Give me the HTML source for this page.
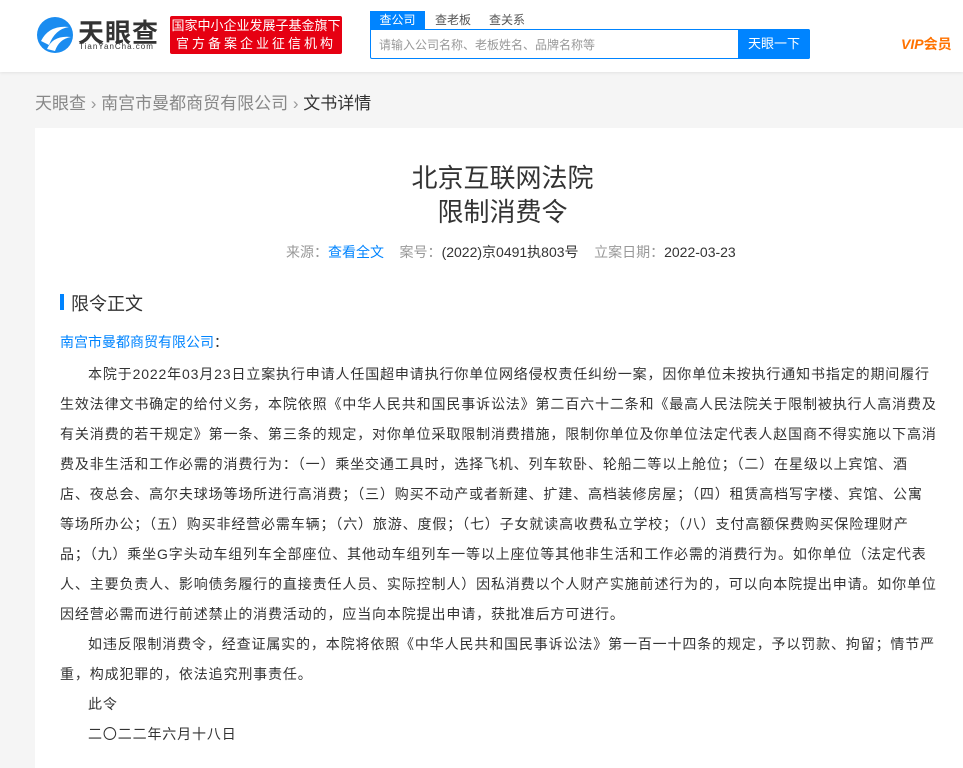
<!DOCTYPE html>
<html><head><meta charset="utf-8"><style>
*{margin:0;padding:0;box-sizing:border-box}
body{width:963px;height:750px;overflow:hidden;background:#f5f5f5;font-family:"Liberation Sans","Noto Sans CJK SC",sans-serif;position:relative}
.hd{position:absolute;left:0;top:0;width:963px;height:72px;background:#fff;box-shadow:0 1px 3px rgba(0,0,0,.08)}
.abs{position:absolute;white-space:nowrap}
.card{position:absolute;left:35px;top:128px;width:940px;height:640px;background:#fff}
.ln{position:absolute;left:60px;font-size:14px;color:#333;white-space:nowrap;line-height:20px;letter-spacing:0.86px}
</style></head><body>
<div class="hd">
<svg class="abs" style="left:35px;top:15px" width="40" height="40" viewBox="0 0 40 40"><circle cx="20" cy="20" r="18" fill="#1a8cf0"/><path d="M6 26 Q14 10 34 12 Q20 14 14 30Z M12 34 Q18 20 36 22 Q24 24 20 36Z" fill="#fff"/></svg>
<div class="abs" style="left:78px;top:13px;font-size:26px;font-weight:bold;color:#333;letter-spacing:1px">天眼查</div>
<div class="abs" style="left:79px;top:42px;font-size:8px;color:#333;letter-spacing:1px">TianYanCha.com</div>
<div class="abs" style="left:170px;top:16px;width:172px;height:38px;background:#e60012;border-radius:2px;color:#fff;font-size:13px;line-height:18px;text-align:center;padding-top:1px">国家中小企业发展子基金旗下<br><span style="letter-spacing:3px">官方备案企业征信机构</span></div>
<div class="abs" style="left:370px;top:11px;width:55px;height:18px;background:#0084ff;color:#fff;font-size:12px;line-height:18px;text-align:center">查公司</div>
<div class="abs" style="left:435px;top:11px;font-size:12px;line-height:18px;color:#555">查老板</div>
<div class="abs" style="left:489px;top:11px;font-size:12px;line-height:18px;color:#555">查关系</div>
<div class="abs" style="left:370px;top:29px;width:440px;height:30px;border:1px solid #0084ff;border-radius:0 2px 2px 2px;background:#fff"></div>
<div class="abs" style="left:379px;top:36px;font-size:12px;color:#999">请输入公司名称、老板姓名、品牌名称等</div>
<div class="abs" style="left:738px;top:29px;width:72px;height:30px;background:#0084ff;color:#fff;font-size:13px;line-height:30px;text-align:center;border-radius:0 2px 2px 0">天眼一下</div>
<div class="abs" style="left:901px;top:34px;font-size:14px;font-weight:bold;color:#ff7200"><i>VIP</i>会员</div>
</div>
<div class="abs" style="left:35px;top:89px;font-size:17px;color:#888">天眼查 <span style="color:#999">›</span> 南宫市曼都商贸有限公司 <span style="color:#999">›</span> <span style="color:#333">文书详情</span></div>
<div class="card"></div>
<div class="abs" style="left:0;width:1005px;top:161px;text-align:center;font-size:26px;color:#333;line-height:34px">北京互联网法院<br>限制消费令</div>
<div class="abs" style="left:286px;top:242px;font-size:14px;color:#999">来源：<span style="color:#0084ff">查看全文</span>&nbsp;&nbsp;&nbsp; 案号：<span style="color:#333">(2022)京0491执803号</span>&nbsp;&nbsp;&nbsp; 立案日期：<span style="color:#333">2022-03-23</span></div>
<div class="abs" style="left:60px;top:294px;width:4px;height:16px;background:#0084ff"></div>
<div class="abs" style="left:71px;top:290px;font-size:18px;color:#333">限令正文</div>
<div class="ln" style="top:332px;letter-spacing:0"><span style="color:#0084ff">南宫市曼都商贸有限公司</span>：</div>
<div class="ln" style="top:364px;left:88px">本院于2022年03月23日立案执行申请人任国超申请执行你单位网络侵权责任纠纷一案，因你单位未按执行通知书指定的期间履行</div>
<div class="ln" style="top:394px">生效法律文书确定的给付义务，本院依照《中华人民共和国民事诉讼法》第二百六十二条和《最高人民法院关于限制被执行人高消费及</div>
<div class="ln" style="top:424px">有关消费的若干规定》第一条、第三条的规定，对你单位采取限制消费措施，限制你单位及你单位法定代表人赵国商不得实施以下高消</div>
<div class="ln" style="top:454px">费及非生活和工作必需的消费行为：（一）乘坐交通工具时，选择飞机、列车软卧、轮船二等以上舱位；（二）在星级以上宾馆、酒</div>
<div class="ln" style="top:484px">店、夜总会、高尔夫球场等场所进行高消费；（三）购买不动产或者新建、扩建、高档装修房屋；（四）租赁高档写字楼、宾馆、公寓</div>
<div class="ln" style="top:514px">等场所办公；（五）购买非经营必需车辆；（六）旅游、度假；（七）子女就读高收费私立学校；（八）支付高额保费购买保险理财产</div>
<div class="ln" style="top:544px">品；（九）乘坐G字头动车组列车全部座位、其他动车组列车一等以上座位等其他非生活和工作必需的消费行为。如你单位（法定代表</div>
<div class="ln" style="top:574px">人、主要负责人、影响债务履行的直接责任人员、实际控制人）因私消费以个人财产实施前述行为的，可以向本院提出申请。如你单位</div>
<div class="ln" style="top:604px">因经营必需而进行前述禁止的消费活动的，应当向本院提出申请，获批准后方可进行。</div>
<div class="ln" style="top:634px;left:88px">如违反限制消费令，经查证属实的，本院将依照《中华人民共和国民事诉讼法》第一百一十四条的规定，予以罚款、拘留；情节严</div>
<div class="ln" style="top:664px">重，构成犯罪的，依法追究刑事责任。</div>
<div class="ln" style="top:694px;left:88px">此令</div>
<div class="ln" style="top:724px;left:88px">二〇二二年六月十八日</div>
</body></html>
